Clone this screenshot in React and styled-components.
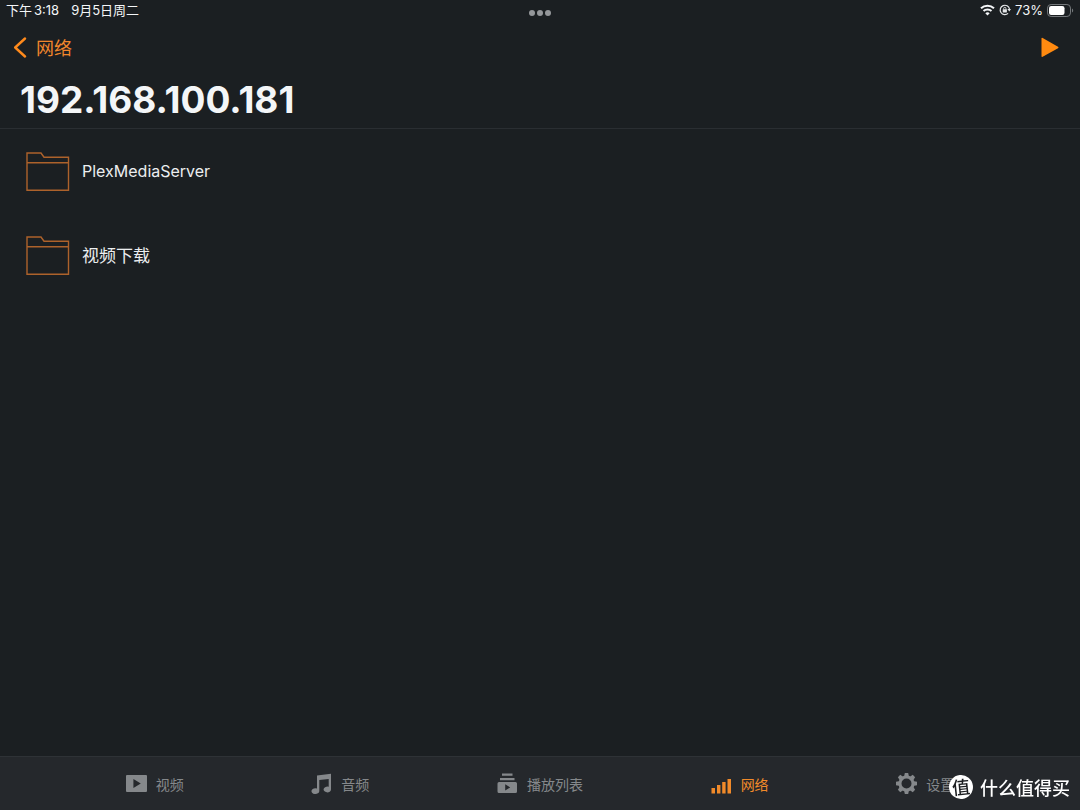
import React from "react";
import styled, { createGlobalStyle } from "styled-components";

const GlobalStyle = createGlobalStyle`
  * { box-sizing: border-box; }
  body {
    margin: 0;
    background: #1b1f22;
    color: #f4f6f8;
    font-family: Inter, "Noto Sans CJK SC", sans-serif;
  }
`;

const Page = styled.div`
  min-height: 100vh;
  display: flex;
  flex-direction: column;
`;

const StatusBar = styled.div`
  display: grid;
  grid-template-columns: 1fr auto 1fr;
  align-items: center;
  height: 20px;
  padding: 0 6px;
  font-size: 13px;
  line-height: 20px;
`;

const StatusGroup = styled.div`
  display: flex;
  align-items: center;
  gap: ${(p) => p.$gap}px;
  justify-self: ${(p) => (p.$end ? "end" : "start")};
`;

const MenuDots = styled.button`
  display: flex;
  gap: 2px;
  padding: 6px 0 0;
  border: 0;
  background: none;
`;

const Dot = styled.span`
  width: 6px;
  height: 6px;
  border-radius: 50%;
  background: #94979a;
`;

const NavBar = styled.nav`
  display: flex;
  align-items: center;
  justify-content: space-between;
  height: 54px;
  padding: 0 20px 0 12px;
`;

const BackLink = styled.a`
  display: flex;
  align-items: center;
  gap: 8px;
  color: #f1862c;
  font-family: "Noto Sans CJK SC", sans-serif;
  font-size: 18px;
  line-height: 24px;
  text-decoration: none;
`;

const PlayButton = styled.button`
  display: flex;
  padding: 0;
  border: 0;
  background: none;
  color: #ff8a10;
`;

const Title = styled.h1`
  margin: 0;
  padding: 2px 20px 5px;
  border-bottom: 1px solid #2a2e32;
  font-size: 37px;
  line-height: 47px;
  font-weight: 700;
`;

const FolderList = styled.ul`
  flex: 1;
  margin: 0;
  padding: 0;
  list-style: none;
`;

const FolderLink = styled.a`
  display: flex;
  align-items: center;
  gap: 12px;
  height: 84px;
  padding: 0 25px;
  color: #eceef0;
  font-family: ${(p) => (p.$cjk ? '"Noto Sans CJK SC", sans-serif' : "Inter, sans-serif")};
  font-size: ${(p) => (p.$cjk ? 17 : 16)}px;
  line-height: 24px;
  text-decoration: none;
`;

const TabBar = styled.nav`
  display: flex;
  align-items: center;
  justify-content: space-evenly;
  gap: 2px;
  height: 54px;
  padding-top: 1px;
  border-top: 1px solid #2e3236;
  background: #25282c;
`;

const Tab = styled.a`
  display: flex;
  align-items: center;
  gap: 9px;
  color: ${(p) => (p.$active ? "#f18a2a" : "#85888b")};
  font-family: "Noto Sans CJK SC", sans-serif;
  font-size: 14px;
  line-height: 20px;
  text-decoration: none;
`;

const Watermark = styled.div`
  position: fixed;
  right: 10px;
  bottom: 10px;
  display: flex;
  align-items: center;
  gap: 7px;
  color: #ffffff;
  font-family: "Noto Sans CJK SC", sans-serif;
  font-size: 18px;
  font-weight: 500;
  line-height: 26px;
`;

const Seal = styled.span`
  display: flex;
  align-items: center;
  justify-content: center;
  width: 24px;
  height: 24px;
  padding-bottom: 2px;
  border-radius: 50%;
  background: #ffffff;
  color: #1b1d20;
  transform: rotate(-6deg);
`;

const WifiIcon = () => (
  <svg width="15" height="12" viewBox="0 0 15 12" fill="none" stroke="#f4f6f8" strokeWidth="2" aria-hidden="true">
    <path d="M1 4.3a9.4 9.4 0 0 1 13 0" />
    <path d="M3.5 7a5.8 5.8 0 0 1 8 0" />
    <path d="M7.5 11.4 5.3 9.2a3.2 3.2 0 0 1 4.4 0Z" fill="#f4f6f8" stroke="none" />
  </svg>
);

const RotationLockIcon = () => (
  <svg width="12" height="12" viewBox="0 0 12 12" fill="none" stroke="#e4e6e8" aria-hidden="true">
    <path d="M9.1 9.4A4.7 4.7 0 1 1 10.5 5" strokeWidth="1.2" />
    <path d="M8.4 5.1H12l-1.7 2.4Z" fill="#e4e6e8" stroke="none" />
    <rect x="3.7" y="5.2" width="4.2" height="3.3" rx=".4" fill="#e4e6e8" stroke="none" />
    <path d="M4.7 5.5V4.4a1.1 1.1 0 0 1 2.2 0v1.1" strokeWidth=".9" />
  </svg>
);

const BatteryIcon = () => (
  <svg width="27" height="13" viewBox="0 0 27 13" aria-hidden="true">
    <rect x=".5" y=".5" width="23" height="12" rx="3.6" fill="none" stroke="#74787b" />
    <rect x="2" y="2" width="15.5" height="9" rx="2.2" fill="#fff" />
    <path d="M25 4.5c1.6.5 1.6 3.5 0 4Z" fill="#74787b" />
  </svg>
);

const BackIcon = () => (
  <svg width="16" height="22" viewBox="0 0 16 22" fill="none" stroke="#ff8a1c" strokeWidth="2.4" strokeLinecap="round" strokeLinejoin="round" aria-hidden="true">
    <path d="M13 2.5 3.2 11.5 13 20.5" />
  </svg>
);

const PlayIcon = () => (
  <svg width="20" height="22" viewBox="0 0 20 22" fill="currentColor" aria-hidden="true">
    <path d="M1.5 2.5Q1.5 1.3 2.7 1.9L18 10.7q1.1.8 0 1.6L2.7 20.8Q1.5 21.3 1.5 20.2Z" />
  </svg>
);

const FolderIcon = () => (
  <svg width="45" height="42" viewBox="0 0 45 42" fill="none" stroke="#ad622b" strokeWidth="1.4" aria-hidden="true">
    <path d="M2 40.2V3h14l3 4.2h24.5v33ZM2 12.7h41.5" />
  </svg>
);

const VideoIcon = () => (
  <svg width="21" height="20" viewBox="0 0 21 20" aria-hidden="true">
    <path fillRule="evenodd" fill="currentColor" d="M1 1h19q1 0 1 1v15q0 1-1 1H1q-1 0-1-1V2q0-1 1-1Zm6.4 4v9l7.4-4.5Z" />
  </svg>
);

const MusicIcon = () => (
  <svg width="21" height="22" viewBox="0 0 21 22" fill="currentColor" aria-hidden="true">
    <path d="M6 2.6 20 .8v15.7a3.7 2.9 0 1 1-2.3-2.7V5.9L8.3 7.1v11.1A3.9 2.9 0 1 1 6 15.5Z" />
  </svg>
);

const PlaylistIcon = () => (
  <svg width="21" height="22" viewBox="0 0 21 22" fill="currentColor" aria-hidden="true">
    <path d="M5 .5h10.5v2.2H5ZM3 5h14.5v2.2H3Z" />
    <path fillRule="evenodd" d="M2 9h16.5q1.5 0 1.5 1.5v8q0 1.5-1.5 1.5H2Q.5 20 .5 18.5v-8Q.5 9 2 9Zm6.2 2.2v6.4l5-3.2Z" />
  </svg>
);

const SignalIcon = () => (
  <svg width="21" height="22" viewBox="0 0 21 22" fill="currentColor" aria-hidden="true">
    <path d="M.5 15H4v5.5H.5ZM6 12h3.4v8.5H6ZM11.2 9h3.4v11.5h-3.4ZM16.5 6H20v14.5h-3.5Z" />
  </svg>
);

const teeth = [0, 45, 90, 135, 180, 225, 270, 315];

const GearIcon = () => (
  <svg width="21" height="22" viewBox="0 0 21 22" fill="currentColor" aria-hidden="true">
    <circle cx="10.5" cy="10.5" r="6.5" fill="none" stroke="currentColor" strokeWidth="3" />
    {teeth.map((angle) => (
      <path key={angle} d="M8 4 8.8 0h3.4L13 4Z" transform={`rotate(${angle} 10.5 10.5)`} />
    ))}
  </svg>
);

const folders = [
  { name: "PlexMediaServer" },
  { name: "视频下载", cjk: true },
];

const tabs = [
  { label: "视频", Icon: VideoIcon },
  { label: "音频", Icon: MusicIcon },
  { label: "播放列表", Icon: PlaylistIcon },
  { label: "网络", Icon: SignalIcon, active: true },
  { label: "设置", Icon: GearIcon },
];

export default function App() {
  return (
    <Page>
      <GlobalStyle />
      <StatusBar>
        <StatusGroup $gap={12}>
          <StatusGroup $gap={2}>
            <span>下午</span>
            <span>3:18</span>
          </StatusGroup>
          <span>9月5日周二</span>
        </StatusGroup>
        <MenuDots aria-label="多任务">
          <Dot />
          <Dot />
          <Dot />
        </MenuDots>
        <StatusGroup $gap={4} $end>
          <WifiIcon />
          <RotationLockIcon />
          <span>73%</span>
          <BatteryIcon />
        </StatusGroup>
      </StatusBar>
      <NavBar>
        <BackLink href="#network">
          <BackIcon />
          网络
        </BackLink>
        <PlayButton aria-label="播放">
          <PlayIcon />
        </PlayButton>
      </NavBar>
      <Title>192.168.100.181</Title>
      <FolderList>
        {folders.map(({ name, cjk }) => (
          <li key={name}>
            <FolderLink href="#folder" $cjk={cjk}>
              <FolderIcon />
              {name}
            </FolderLink>
          </li>
        ))}
      </FolderList>
      <TabBar>
        {tabs.map(({ label, Icon, active }) => (
          <Tab key={label} href="#tab" $active={active} aria-current={active ? "page" : undefined}>
            <Icon />
            {label}
          </Tab>
        ))}
      </TabBar>
      <Watermark>
        <Seal>值</Seal>
        什么值得买
      </Watermark>
    </Page>
  );
}
